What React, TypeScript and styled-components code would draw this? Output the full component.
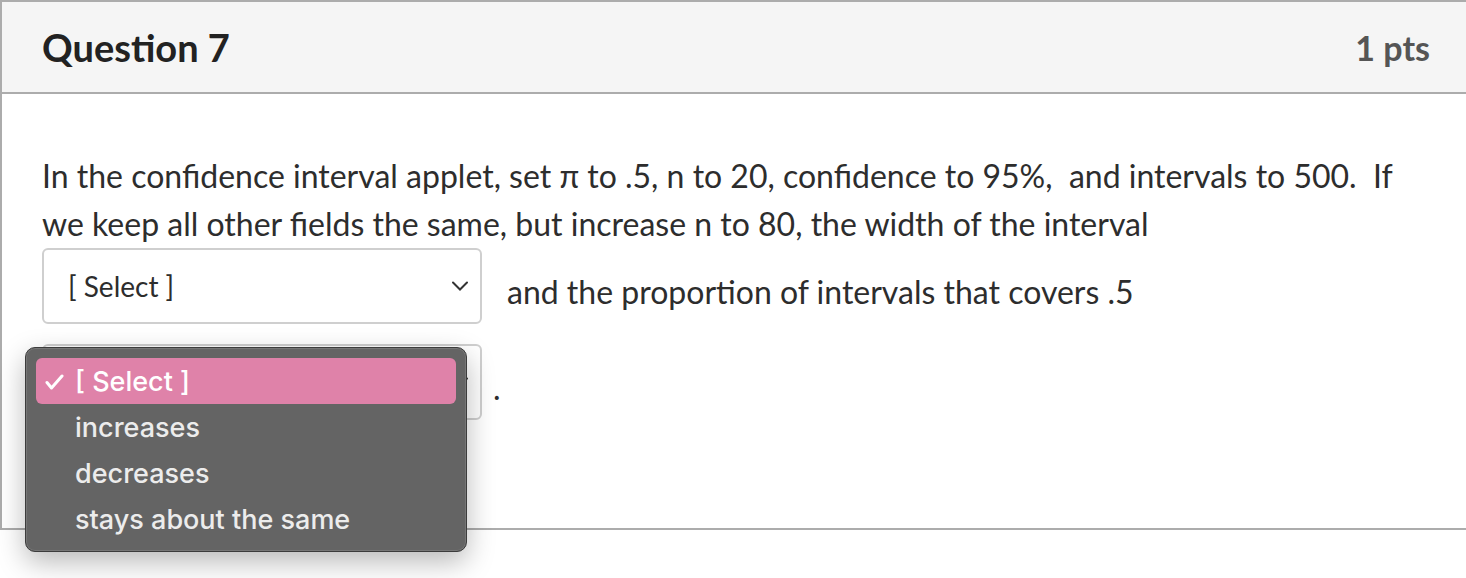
import React from 'react'
import styled, { createGlobalStyle } from 'styled-components'

const GlobalStyle = createGlobalStyle`
  html, body {
    margin: 0;
    padding: 0;
    background: #fff;
  }
  body {
    font-family: Lato, 'Noto Sans', sans-serif;
    color: #2d2d2d;
    overflow: hidden;
  }
`

const Page = styled.div`
  position: relative;
  width: 1466px;
  height: 578px;
`

const Card = styled.section`
  border-top: 2px solid #acacac;
  border-left: 2px solid #acacac;
  border-bottom: 2px solid #acacac;
`

const Header = styled.header`
  display: flex;
  align-items: center;
  justify-content: space-between;
  height: 90px;
  padding: 0 36px 0 40px;
  background: #f5f5f5;
  border-bottom: 2px solid #acacac;
`

const Title = styled.h2`
  margin: 0;
  font-size: 38px;
  font-weight: 700;
  color: #222;
`

const Points = styled.span`
  font-size: 34px;
  font-weight: 700;
  color: #555;
`

const Body = styled.div`
  box-sizing: border-box;
  height: 434px;
  padding: 58px 0 0 40px;
`

const Para = styled.p`
  margin: 0;
  font-size: 32px;
  line-height: 48px;
  color: #2d2d2d;
`

const Row = styled.div<{ $top: number }>`
  display: flex;
  align-items: flex-start;
  margin-top: ${p => p.$top}px;
`

const SelectBox = styled.div`
  box-sizing: border-box;
  display: flex;
  align-items: center;
  justify-content: space-between;
  width: 440px;
  height: 76px;
  padding: 0 12px 0 24px;
  border: 2px solid #cfcfcf;
  border-radius: 6px;
  background: #fff;
  font-size: 28px;
  color: #2d2d2d;
`

const Inline = styled.span<{ $gap: number }>`
  margin: 20px 0 0 ${p => p.$gap}px;
  font-size: 32px;
  line-height: 48px;
  color: #2d2d2d;
`

const Menu = styled.ul`
  position: absolute;
  left: 25px;
  top: 347px;
  box-sizing: border-box;
  width: 442px;
  height: 205px;
  margin: 0;
  padding: 10px;
  list-style: none;
  background: #646464;
  border: 1px solid #3c3c3c;
  border-radius: 10px;
  box-shadow: 0 10px 28px rgba(0, 0, 0, 0.28), inset 0 0 0 1px rgba(255, 255, 255, 0.12);
  font-family: Inter, 'Open Sans', sans-serif;
`

const Option = styled.li<{ $active?: boolean }>`
  position: relative;
  display: flex;
  align-items: center;
  height: 46px;
  padding-left: 39px;
  border-radius: 6px;
  background: ${p => (p.$active ? '#df82a9' : 'transparent')};
  color: ${p => (p.$active ? '#fff' : '#ececec')};
  font-size: 27px;
  font-weight: 500;
`

const Check = styled.svg`
  position: absolute;
  left: 9px;
  top: 16px;
`

const Chevron = () => (
  <svg width="16" height="10" viewBox="0 0 16 10" fill="none">
    <path d="M1 1.5 L8 8.5 L15 1.5" stroke="#333" strokeWidth="2" strokeLinecap="round" />
  </svg>
)

const options = ['[ Select ]', 'increases', 'decreases', 'stays about the same']

export default function App() {
  return (
    <Page>
      <GlobalStyle />
      <Card>
        <Header>
          <Title>Question 7</Title>
          <Points>1 pts</Points>
        </Header>
        <Body>
          <Para>
            In the confidence interval applet, set π to .5, n to 20, confidence to 95%,&nbsp; and intervals to 500.&nbsp; If
            <br />
            we keep all other fields the same, but increase n to 80, the width of the interval
          </Para>
          <Row $top={0}>
            <SelectBox>
              <span>[ Select ]</span>
              <Chevron />
            </SelectBox>
            <Inline $gap={25}>and the proportion of intervals that covers .5</Inline>
          </Row>
          <Row $top={20}>
            <SelectBox>
              <span>[ Select ]</span>
              <Chevron />
            </SelectBox>
            <Inline $gap={11}>.</Inline>
          </Row>
        </Body>
      </Card>
      <Menu>
        {options.map((o, i) => (
          <Option key={o} $active={i === 0}>
            {i === 0 && (
              <Check width="19" height="16" viewBox="0 0 19 16" fill="none">
                <path d="M2 8.5 L6.5 14 L17 2" stroke="#fff" strokeWidth="3" strokeLinecap="round" strokeLinejoin="round" />
              </Check>
            )}
            {o}
          </Option>
        ))}
      </Menu>
    </Page>
  )
}
